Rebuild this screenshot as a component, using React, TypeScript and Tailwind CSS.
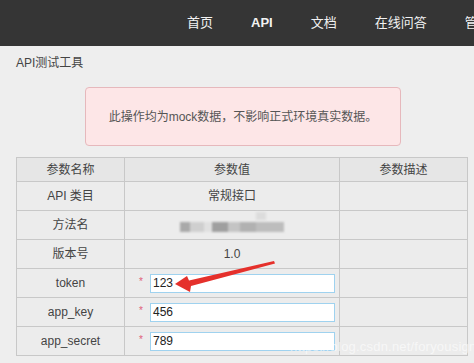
import React from "react";

const font = "font-['Liberation_Sans','Noto_Sans_CJK_SC',sans-serif]";

const navItems = ["首页", "API", "文档", "在线问答", "管理中心"];

const rows: { name: string; value?: string; input?: string; blur?: boolean }[] = [
  { name: "API 类目", value: "常规接口" },
  { name: "方法名", blur: true },
  { name: "版本号", value: "1.0" },
  { name: "token", input: "123" },
  { name: "app_key", input: "456" },
  { name: "app_secret", input: "789" },
];

const BlurredText = () => (
  <div className="relative mx-auto flex h-[14px] w-[104px] items-end blur-[1.2px]">
    <div className="h-[10px] w-[10px] bg-[#a9a9a9]" />
    <div className="h-[10px] w-[14px] bg-[#cfcfcf]" />
    <div className="h-[10px] w-[8px] bg-[#e0e0e0]" />
    <div className="h-[10px] w-[16px] bg-[#9f9f9f]" />
    <div className="h-[10px] w-[12px] bg-[#c4c4c4]" />
    <div className="h-[10px] w-[16px] bg-[#b1b1b1]" />
    <div className="h-[10px] w-[28px] bg-[#bdbdbd]" />
    <div className="absolute left-[76px] top-[-6px] h-[8px] w-[10px] bg-[#dcdcdc]" />
  </div>
);

export default function App() {
  return (
    <div className={`relative h-[363px] w-[474px] overflow-hidden bg-[#eeeeee] ${font}`}>
      <header className="flex h-[46px] items-center gap-[38px] overflow-hidden whitespace-nowrap bg-[#353535] pl-[187px] text-[13px] text-[#f2f2f2]">
        {navItems.map((n) => (
          <span key={n} className={n === "API" ? "font-bold" : ""}>
            {n}
          </span>
        ))}
      </header>

      <div className="px-4 pt-[10px]">
        <div className="text-[12px] leading-[14px] text-[#444]">API测试工具</div>

        <div className="ml-[69px] mt-[17px] flex h-[59px] w-[316px] items-center justify-center rounded-[4px] border border-[#e6b8bc] bg-[#fde6e7] text-[12px] text-[#555]">
          此操作均为mock数据，不影响正式环境真实数据。
        </div>

        <table className="mt-[11px] w-[451px] table-fixed border-collapse text-center text-[12px] text-[#444]">
          <colgroup>
            <col className="w-[108px]" />
            <col className="w-[215px]" />
            <col className="w-[128px]" />
          </colgroup>
          <thead>
            <tr className="h-[24px] bg-[#e6e6e6]">
              <th className="border border-[#c8c8c8] font-normal">参数名称</th>
              <th className="border border-[#c8c8c8] font-normal">参数值</th>
              <th className="border border-[#c8c8c8] font-normal">参数描述</th>
            </tr>
          </thead>
          <tbody>
            {rows.map((r) => (
              <tr key={r.name} className="h-[29px] bg-[#ececec]">
                <td className="border border-[#c8c8c8]">{r.name}</td>
                <td className="border border-[#c8c8c8]">
                  {r.blur && <BlurredText />}
                  {r.value && <span>{r.value}</span>}
                  {r.input && (
                    <div className="flex items-center pl-[14px]">
                      <span className="w-[11px] self-start pt-[3px] text-left text-[10px] leading-[10px] text-[#e0607a]">
                        *
                      </span>
                      <div className="flex h-[19px] w-[185px] items-center border border-[#9fd2ef] bg-white pl-[2px] text-left text-[12px] text-[#222]">
                        {r.input}
                      </div>
                    </div>
                  )}
                </td>
                <td className="border border-[#c8c8c8]" />
              </tr>
            ))}
          </tbody>
        </table>
      </div>

      {/* red annotation arrow */}
      <svg className="absolute left-0 top-0" width="474" height="363" viewBox="0 0 474 363">
        <polygon
          points="274,261 275,263.5 191,286 190,292 175,284 187,276 189,280.5"
          fill="#e5302b"
        />
      </svg>

      <div className="absolute left-[290px] top-[337px] text-[13px] tracking-[0.2px] text-white/60">
        https://blog.csdn.net/foryousignia
      </div>
    </div>
  );
}
